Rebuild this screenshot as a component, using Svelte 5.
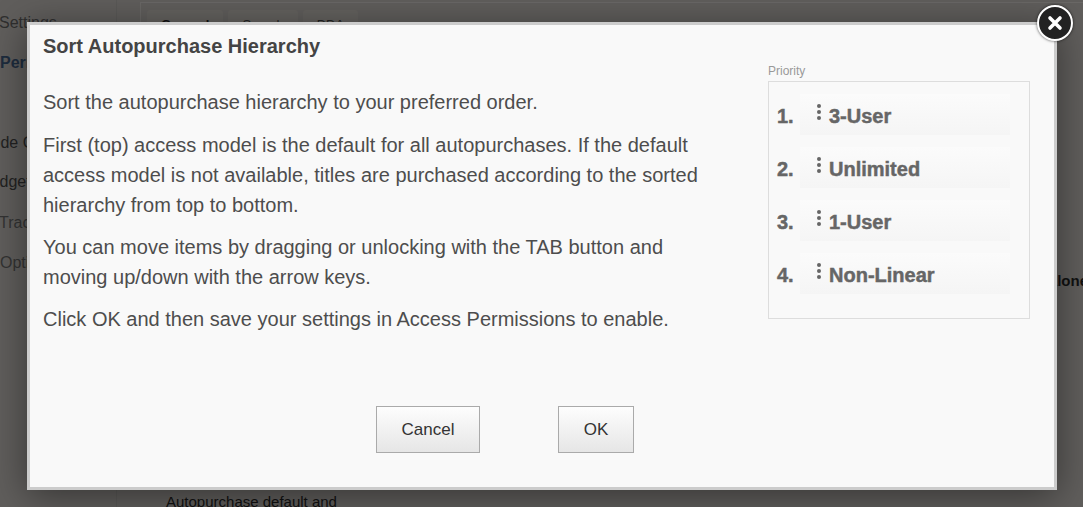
<script lang="ts">
  const navItems = [
    { label: 'Settings', cls: 'settings' },
    { label: 'Permissions', cls: 'perm' },
    { label: 'Code Generator', cls: 'code' },
    { label: 'Budgets', cls: 'budget' },
    { label: 'Tracking', cls: 'track' },
    { label: 'Options', cls: 'opt' }
  ]
  const tabs = ['General', 'Search', 'DDA']
  const priorities = ['3-User', 'Unlimited', '1-User', 'Non-Linear']
</script>

<div class="page">
  <aside class="sidebar">
    {#each navItems as item}
      <div class="nav-item {item.cls}">{item.label}</div>
    {/each}
  </aside>
  <main class="content">
    <div class="tabs">
      {#each tabs as tab, i}
        <span class="tab" class:active={i === 0}>{tab}</span>
      {/each}
    </div>
    <div class="body-row"><span>Standalone</span></div>
    <div class="body-foot">Autopurchase default and</div>
  </main>
</div>

<div class="dialog" role="dialog" aria-modal="true" aria-label="Sort Autopurchase Hierarchy">
  <button class="close-btn" aria-label="Close">
    <svg viewBox="0 0 16 16" width="16" height="16">
      <path d="M3 3 L13 13 M13 3 L3 13" stroke="#fff" stroke-width="3.6" stroke-linecap="round" />
    </svg>
  </button>
  <h3>Sort Autopurchase Hierarchy</h3>
  <div class="columns">
    <div class="copy">
      <p>Sort the autopurchase hierarchy to your preferred order.</p>
      <p>First (top) access model is the default for all autopurchases. If the default access model is not available, titles are purchased according to the sorted hierarchy from top to bottom.</p>
      <p>You can move items by dragging or unlocking with the TAB button and moving up/down with the arrow keys.</p>
      <p>Click OK and then save your settings in Access Permissions to enable.</p>
    </div>
    <div class="priority">
      <div class="priority-label">Priority</div>
      <ol class="priority-box">
        {#each priorities as name, i}
          <li>
            <span class="num">{i + 1}.</span>
            <div class="item">
              <span class="dots"><i></i><i></i><i></i></span>
              <span class="name">{name}</span>
            </div>
          </li>
        {/each}
      </ol>
    </div>
  </div>
  <div class="actions">
    <button class="btn cancel">Cancel</button>
    <button class="btn ok">OK</button>
  </div>
</div>

<style>
  :global(body) {
    margin: 0;
    font-family: "Liberation Sans", Arial, sans-serif;
    overflow: hidden;
  }

  .page {
    width: 1083px;
    height: 507px;
    display: flex;
    overflow: hidden;
    background: #605e5c;
    color: #1e1e1e;
    font-size: 15px;
  }

  .sidebar {
    width: 117px;
    flex: none;
    border-right: 1px solid #5a5957;
    display: flex;
    flex-direction: column;
    padding-top: 14px;
    box-sizing: border-box;
    overflow: hidden;
  }

  .nav-item {
    font-size: 16px;
    line-height: 17px;
    color: #2f2f2f;
    white-space: nowrap;
  }

  .settings { margin-left: -1px; }
  .perm { margin-top: 23px; font-weight: bold; color: #1d2c3e; }
  .code { margin-top: 63px; margin-left: -20px; color: #222; }
  .budget { margin-top: 22px; margin-left: -20px; color: #222; }
  .track { margin-top: 24px; margin-left: -1px; color: #333; }
  .opt { margin-top: 23px; color: #333; }

  .content {
    flex: 1;
    min-width: 0;
    padding: 2px 0 0 23px;
    display: flex;
    flex-direction: column;
  }

  .tabs {
    display: flex;
    gap: 5px;
    padding: 7px 0 0 6px;
    border-top: 1px solid #6a6866;
    border-left: 1px solid #6a6866;
    height: 40px;
    box-sizing: border-box;
  }

  .tab {
    height: 30px;
    padding: 0 14px;
    line-height: 30px;
    background: #64625f;
    border-radius: 3px 3px 0 0;
    color: #222;
    font-size: 13px;
  }

  .tab.active { font-weight: bold; color: #111; }

  .body-row {
    margin-top: 233px;
    text-align: right;
    font-size: 15px;
    font-weight: bold;
    color: #111;
    line-height: 16px;
    white-space: nowrap;
  }

  .body-row span { margin-right: -5px; }

  .body-foot {
    margin-top: 205px;
    margin-left: 26px;
    color: #111;
    line-height: 16px;
  }

  .dialog {
    position: absolute;
    left: 27px;
    top: 22px;
    width: 1030px;
    height: 468px;
    box-sizing: border-box;
    border: 3px solid #ccc;
    background: #f9f9f9;
    padding: 9px 13px 0;
    display: flex;
    flex-direction: column;
    color: #4d4d4d;
    box-shadow: 0 6px 36px rgba(0, 0, 0, 0.45);
  }

  h3 {
    margin: 0;
    font-size: 20px;
    line-height: 24px;
    font-weight: bold;
    color: #444;
  }

  .columns {
    display: flex;
    justify-content: space-between;
    height: 334px;
  }

  .copy {
    width: 670px;
    padding-top: 29px;
  }

  .copy p {
    margin: 0 0 12px;
    font-size: 20px;
    line-height: 30px;
  }

  .copy p:first-child {
    margin-bottom: 13px;
  }

  .priority {
    width: 262px;
    margin-right: 11px;
    padding-top: 6px;
  }

  .priority-label {
    font-size: 12px;
    line-height: 14px;
    color: #999;
    margin-bottom: 3px;
  }

  .priority-box {
    list-style: none;
    margin: 0;
    height: 238px;
    box-sizing: border-box;
    border: 1px solid #ddd;
    padding: 12px 19px 0 8px;
    display: flex;
    flex-direction: column;
    gap: 12px;
  }

  .priority-box li {
    display: flex;
    align-items: center;
    height: 41px;
  }

  .num {
    width: 23px;
    font-size: 20px;
    font-weight: bold;
    color: #666;
    -webkit-text-stroke: 0.45px #666;
    padding-top: 3px;
  }

  .item {
    flex: 1;
    height: 41px;
    background: linear-gradient(180deg, #fbfbfb, #f5f5f5);
    display: flex;
    align-items: center;
    padding-left: 17px;
    box-sizing: border-box;
    gap: 8px;
  }

  .dots {
    display: flex;
    flex-direction: column;
    gap: 2px;
    width: 4px;
    margin-top: -6px;
  }

  .dots i {
    width: 4px;
    height: 4px;
    border-radius: 50%;
    background: #666;
  }

  .name {
    font-size: 20px;
    font-weight: bold;
    color: #666;
    -webkit-text-stroke: 0.45px #666;
    padding-top: 3px;
  }

  .actions {
    display: flex;
    justify-content: center;
    gap: 78px;
    margin-top: 14px;
    padding-right: 74px;
  }

  .btn {
    height: 47px;
    box-sizing: border-box;
    border: 1px solid #aaa;
    background: linear-gradient(180deg, #fdfdfd, #e6e6e6);
    font-family: inherit;
    font-size: 17px;
    color: #333;
    padding: 0;
  }

  .cancel { width: 104px; }
  .ok { width: 76px; }

  .close-btn {
    position: absolute;
    top: -20px;
    right: -19px;
    width: 36px;
    height: 36px;
    box-sizing: border-box;
    border: 2px solid #fff;
    border-radius: 50%;
    background: #222;
    padding: 0;
    display: flex;
    align-items: center;
    justify-content: center;
    box-shadow: 0 0 3px rgba(0, 0, 0, 0.7);
  }
</style>
